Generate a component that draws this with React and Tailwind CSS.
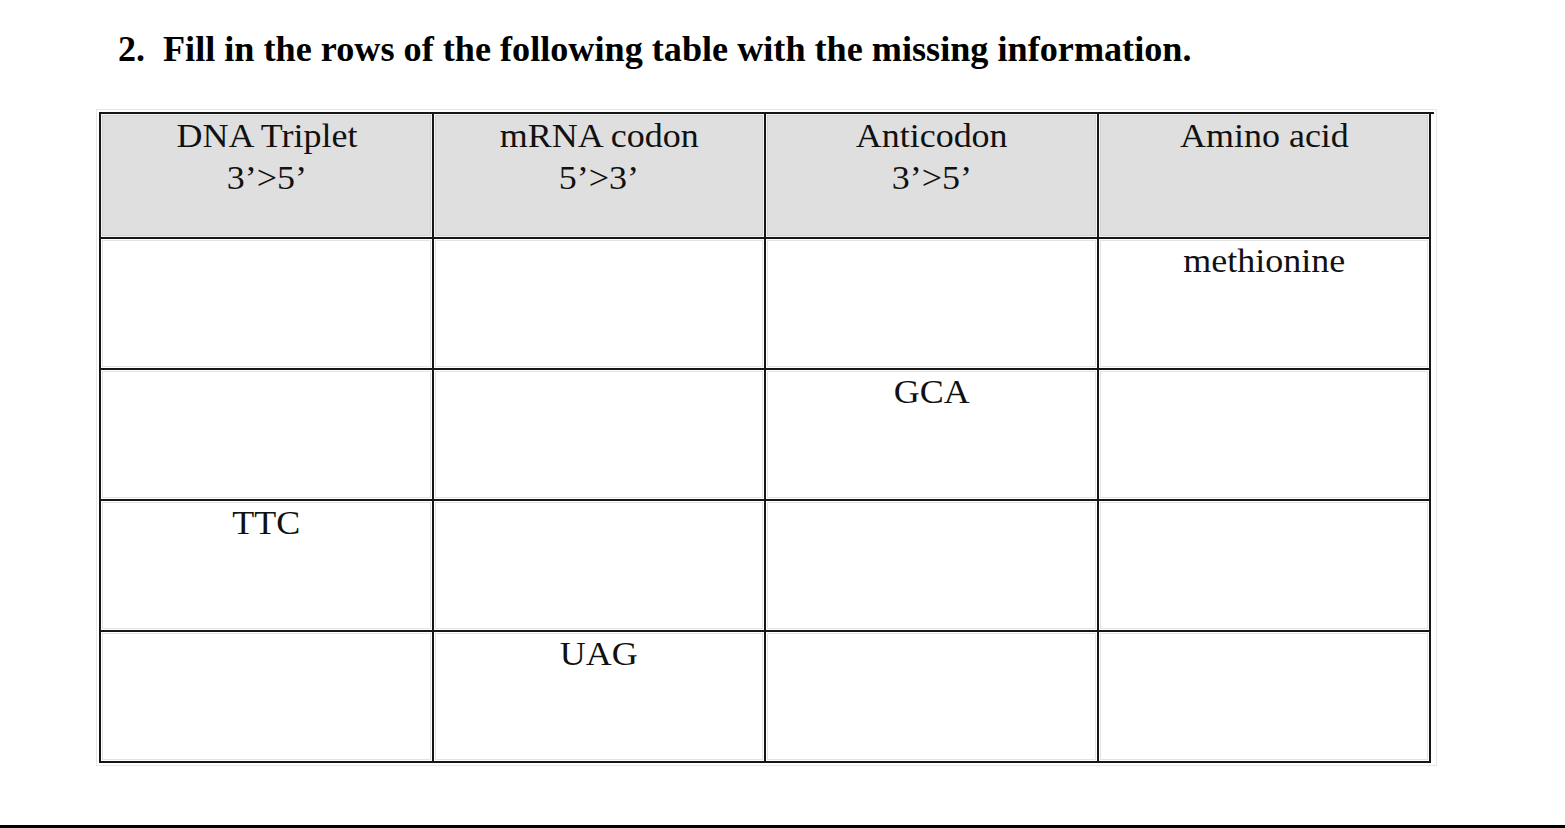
// Worksheet question: codon table
const headers = [
  ['DNA Triplet', '3’>5’'],
  ['mRNA codon', '5’>3’'],
  ['Anticodon', '3’>5’'],
  ['Amino acid', ''],
]

const rows = [
  ['', '', '', 'methionine'],
  ['', '', 'GCA', ''],
  ['TTC', '', '', ''],
  ['', 'UAG', '', ''],
]

const cellBase =
  'border-r-2 border-b-2 border-[#161616] pt-[1px] text-center text-[33px] leading-[42px] text-[#111]'

const Cell = ({ lines, head }) => (
  <div
    className={`${cellBase} ${
      head
        ? 'bg-[#dfdfdf] shadow-[inset_0_0_0_1px_#f4f4f4,inset_0_0_0_2px_#d2d2d2]'
        : 'bg-white shadow-[inset_0_0_0_1px_#fff,inset_0_0_0_2px_#e3e3e3]'
    }`}
  >
    {lines.filter(Boolean).map((t, i) => (
      <div key={i}>
        <span className="inline-block scale-x-[1.09]">{t}</span>
      </div>
    ))}
  </div>
)

export default function App() {
  return (
    <div className="h-[828px] w-[1565px] flex flex-col bg-white font-['Liberation_Serif','Times_New_Roman',serif] text-black overflow-hidden">
      <h2 className="mt-[29px] ml-[118px] text-[36px] leading-[40px] font-bold whitespace-nowrap">
        <span className="inline-block w-[45px]">2.</span>
        <span className="inline-block origin-left scale-x-[1.005]">
          Fill in the rows of the following table with the missing information.
        </span>
      </h2>

      <div className="mt-[41px] ml-[97px] w-[1339px] p-[2px] outline outline-1 outline-[#e6e6e6] outline-offset-[0px]">
        <div className="grid grid-cols-[333px_332px_333px_332px] grid-rows-[125px_131px_131px_131px_131px] border-l-2 border-t-2 border-[#161616]">
          {headers.map((h, i) => (
            <Cell key={'h' + i} lines={h} head />
          ))}
          {rows.map((r, ri) =>
            r.map((c, ci) => <Cell key={ri + '-' + ci} lines={[c]} />)
          )}
        </div>
      </div>

      <div className="mt-auto h-[3px] bg-black" />
    </div>
  )
}
